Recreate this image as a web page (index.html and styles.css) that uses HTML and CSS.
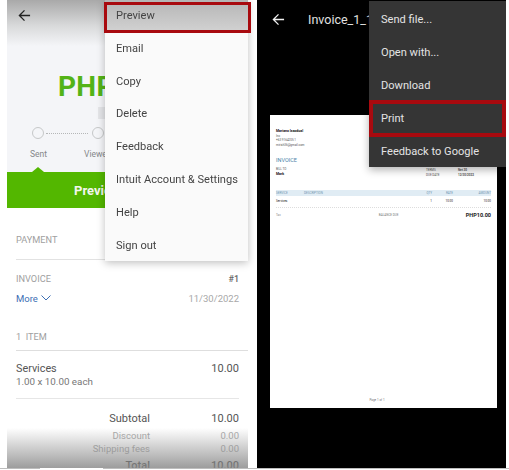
FILE: index.html
```html
<!DOCTYPE html>
<html>
<head>
<meta charset="utf-8">
<link rel="stylesheet" href="styles.css">
</head>
<body>
<div class="stage">
  <section class="phone">
    <div class="hero">
      <svg class="back" width="13" height="13" viewBox="0 0 14 14"><path d="M13 7H2M7 1.500 1.500 7 7 12.500" fill="none" stroke="#222" stroke-width="1.400"/></svg>
      <div class="amount">PHP10.00</div>
      <div class="pill">Due</div>
      <div class="steps">
        <div class="step"><span class="dot"></span><span class="dash"></span></div>
        <div class="step"><span class="dot"></span><span class="dash"></span></div>
      </div>
      <div class="labels"><span class="sent">Sent</span><span class="viewed">Viewed</span></div>
    </div>
    <div class="cta"><span class="caret"></span>Preview invoice</div>
    <div class="details">
      <div class="row payment"><span class="cap">PAYMENT</span></div>
      <div class="row inv1"><span class="cap">INVOICE</span><span class="num">#1</span></div>
      <div class="row inv2"><span class="more">More <svg width="10" height="6" viewBox="0 0 10 6"><path d="M.5.500 5 5 9.500.500" fill="none" stroke="#3d6fb4"/></svg></span><span class="date">11/30/2022</span></div>
      <div class="items cap">1&nbsp; ITEM</div>
      <div class="line">
        <div class="row"><span class="name">Services</span><span class="price">10.00</span></div>
        <div class="each">1.00 x 10.00 each</div>
      </div>
      <div class="tot main"><span>Subtotal</span><span>10.00</span></div>
      <div class="tot sub first"><span>Discount</span><span>0.00</span></div>
      <div class="tot sub"><span>Shipping fees</span><span>0.00</span></div>
      <div class="tot total"><span>Total</span><span>10.00</span></div>
    </div>
    <div class="shade-bottom"></div>
    <ul class="menu light">
      <li>Preview</li><li>Email</li><li>Copy</li><li>Delete</li><li>Feedback</li><li>Intuit Account &amp; Settings</li><li>Help</li><li>Sign out</li>
    </ul>
    <div class="mark mark-preview"></div>
  </section>

  <section class="phone dark">
    <div class="viewer-bar">
      <svg width="13" height="13" viewBox="0 0 14 14"><path d="M13 7H2M7 1.500 1.500 7 7 12.500" fill="none" stroke="#f2f2f2" stroke-width="1.400"/></svg>
      <span class="file">Invoice_1_11</span>
    </div>
    <article class="doc">
      <div class="doc-top">
        <div class="biz">
          <b>Mariano Isacdual</b>
          <span>Inc</span><span>+63 9164205 1</span><span>mirish36@gmail.com</span>
          <div class="doc-title">INVOICE</div>
          <span>BILL TO</span><b>Mark</b>
        </div>
        <div class="meta">
          <div><span>DATE</span><b>11/30/2022</b></div>
          <div><span>TERMS</span><b>Net 30</b></div>
          <div><span>DUE DATE</span><b>12/30/2022</b></div>
        </div>
      </div>
      <div class="doc-head"><span class="c1">SERVICE</span><span class="c2">DESCRIPTION</span><span class="c3">QTY</span><span class="c4">RATE</span><span class="c5">AMOUNT</span></div>
      <div class="doc-row"><span class="c1">Services</span><span class="c2"></span><span class="c3">1</span><span class="c4">10.00</span><span class="c5">10.00</span></div>
      <div class="doc-sum"><span class="tax">Tax</span><span class="bal">BALANCE DUE</span><b>PHP10.00</b></div>
      <div class="doc-foot">Page 1 of 1</div>
    </article>
    <ul class="menu darkmenu">
      <li>Send file...</li><li>Open with...</li><li>Download</li><li>Print</li><li>Feedback to Google</li>
    </ul>
    <div class="mark mark-print"></div>
  </section>
</div>
<div class="tabstrip"><span class="tab"></span></div>
</body>
</html>
```
FILE: styles.css
```css
* { box-sizing: border-box; }
html, body { margin: 0; padding: 0; background: #fff; }
body { width: 509px; height: 470px; overflow: hidden; font-family: Roboto, "Liberation Sans", sans-serif; }
ul { list-style: none; margin: 0; padding: 0; }
.stage { display: flex; height: 468px; padding-left: 7px; gap: 9px; filter: blur(.3px); }
.phone { position: relative; width: 241px; height: 468px; background: #fff; }
.phone.dark { width: 249px; background: #000; overflow: hidden; }

.hero { position: relative; height: 172px; background: linear-gradient(#a9a9a9 0, #d9dadb 26px, #f4f5f8 46px); }
.back { position: absolute; left: 11px; top: 9px; }
.amount { position: absolute; left: 51px; top: 70px; font-size: 28px; font-weight: 700; color: #53b317; line-height: 34px; letter-spacing: .3px; }
.pill { position: absolute; left: 91px; top: 107px; width: 30px; height: 12px; background: #e4e5e8; font-size: 8px; line-height: 12px; text-align: center; color: #666; }
.steps { position: absolute; left: 25px; top: 127px; display: flex; }
.step { display: flex; align-items: center; width: 60px; }
.dot { width: 12px; height: 12px; border: 1px solid #c6c8c9; border-radius: 50%; flex: none; }
.dash { width: 42px; margin-left: 2px; border-top: 1px dotted #b5b7b8; }
.labels { position: absolute; top: 149px; left: 0; font-size: 8.500px; line-height: 10px; color: #85878a; }
.sent { position: absolute; left: 23px; }
.viewed { position: absolute; left: 77px; }
.cta { position: relative; height: 36px; background: #53b700; color: #f3f6ee; font-size: 13px; font-weight: 700; line-height: 37px; padding-left: 67px; white-space: nowrap; }
.caret { position: absolute; left: 25px; top: -5px; border: 6px solid transparent; border-top: 0; border-bottom: 5px solid #53b700; }

.details { height: 260px; overflow: hidden; padding: 0 9px; color: #444; font-size: 11px; }
.row { display: flex; justify-content: space-between; }
.cap { font-size: 9.200px; color: #a0a0a0; }
.payment { height: 52px; padding-top: 26px; line-height: 12px; border-bottom: 1px solid #e2e2e2; width: 233px; }
.inv1 { margin-top: 12px; line-height: 14px; }
.num { color: #666; font-size: 9px; font-weight: 500; }
.inv2 { margin-top: 6px; line-height: 14px; }
.more { color: #3d6fb4; font-size: 9.500px; }
.more svg { margin-left: 1px; vertical-align: 1px; }
.date { color: #a8a8a8; font-size: 9.500px; }
.items { margin-top: 24px; line-height: 14px; height: 21px; border-bottom: 1px solid #dedede; width: 233px; }
.line { padding-top: 11px; height: 48px; border-bottom: 1px solid #e6e6e6; }
.name { font-size: 10.800px; line-height: 14px; color: #555; }
.price { font-size: 11px; line-height: 14px; color: #555; }
.each { font-size: 9.800px; line-height: 12px; color: #777; }
.tot { display: grid; grid-template-columns: 134px 1fr; text-align: right; }
.main { margin-top: 13px; font-size: 11px; line-height: 14px; color: #555; }
.sub { font-size: 9.500px; line-height: 13px; color: #ababab; }
.first { margin-top: 3px; }
.total { margin-top: 4px; font-size: 11px; line-height: 14px; color: #333; font-weight: 500; }
.shade-bottom { position: absolute; left: 0; right: 0; bottom: 0; height: 40px; background: linear-gradient(rgba(160,160,160,0), rgba(140,140,140,.85)); }

.menu { position: absolute; }
.menu li { white-space: nowrap; }
.light { left: 98px; top: 0; width: 143px; height: 261px; background: #fafafa; color: #444; font-size: 11.100px; box-shadow: 0 2px 8px rgba(0,0,0,.25); }
.light li { height: 32.800px; line-height: 32px; padding-left: 11px; }
.light li:first-child { background: linear-gradient(#b5b5b5, #d3d3d3); }
.mark { position: absolute; border: 3px solid #a80a0f; }
.mark-preview { left: 97px; top: 2px; width: 147px; height: 31px; }

.viewer-bar { display: flex; align-items: center; height: 38px; padding-left: 15px; color: #e0e0e0; font-size: 12.500px; white-space: nowrap; }
.file { margin-left: 23px; }
.doc { position: absolute; left: 13px; top: 115px; width: 227px; height: 293px; background: #fff; padding: 14px 6px 0 6px; font-size: 3px; line-height: 4.500px; color: #555; }
.doc-top { display: flex; justify-content: space-between; height: 48px; }
.biz { display: flex; flex-direction: column; }
.biz b { color: #111; font-size: 3.500px; }
.doc-title { color: #4a7fa8; font-size: 5.500px; line-height: 8px; margin: 9px 0 3px; }
.meta { display: flex; flex-direction: column; justify-content: flex-end; width: 65px; }
.meta div { display: flex; }
.meta span { width: 32px; }
.doc-head, .doc-row { display: grid; grid-template-columns: 28px 95px 33px 21px 38px; align-items: center; width: 215px; }
.doc-head { height: 6px; margin-top: 13px; background: #e0ecf4; color: #6f95b0; }
.doc-row { height: 12px; border-bottom: 1px dotted #ddd; color: #222; }
.c3, .c4, .c5 { text-align: right; }
.doc-sum { display: flex; align-items: center; margin-top: 3px; height: 8px; }
.tax { width: 104px; color: #888; }
.bal { width: 88px; color: #777; }
.doc-sum b { font-size: 5.500px; color: #222; line-height: 8px; }
.doc-foot { margin-top: 179px; padding-right: 13px; text-align: center; color: #777; }
.darkmenu { left: 112px; top: 1px; width: 137px; height: 166px; background: #353535; padding: 2px 0 0 12px; color: #e4e4e4; font-size: 11.100px; box-shadow: 0 3px 8px rgba(0,0,0,.3); }
.darkmenu li { height: 33px; line-height: 34px; }
.mark-print { left: 112px; top: 100px; width: 137px; height: 37px; border-width: 4px; }

.tabstrip { position: relative; height: 2px; border-top: 1px solid #bdbdbd; }
.tab { position: absolute; left: 40px; top: -1px; width: 63px; height: 2px; background: #fff; }
```
